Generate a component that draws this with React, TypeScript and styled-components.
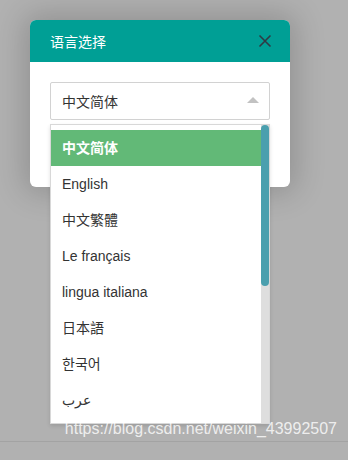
import React from 'react';
import styled, { createGlobalStyle } from 'styled-components';

const GlobalStyle = createGlobalStyle`
  html, body {
    margin: 0;
    padding: 0;
    background: #b1b1b1;
    font-family: "Liberation Sans", "Noto Sans CJK SC", Arial, sans-serif;
  }
`;

const Page = styled.div`
  position: relative;
  width: 348px;
  height: 460px;
  overflow: hidden;
  display: flex;
  flex-direction: column;
  background: #b1b1b1;
`;

const Stage = styled.div`
  padding: 20px 58px 0 30px;
`;

const Modal = styled.div`
  position: relative;
  width: 260px;
  border-radius: 6px;
  background: #fff;
  box-shadow: 0 0 30px 6px rgba(0, 0, 0, 0.18);
`;

const Header = styled.div`
  height: 42px;
  display: flex;
  align-items: center;
  justify-content: space-between;
  padding: 0 18px 0 20px;
  background: #009f95;
  border-radius: 6px 6px 0 0;
  color: #fff;
  font-size: 14px;
`;

const CloseButton = styled.button`
  width: 14px;
  height: 14px;
  padding: 0;
  border: 0;
  background: none;
  display: flex;
  cursor: pointer;
`;

const Body = styled.div`
  position: relative;
  padding: 20px 20px 67px;
`;

const SelectBox = styled.div`
  height: 36px;
  border: 1px solid #d2d2d2;
  border-radius: 2px;
  display: flex;
  align-items: center;
  justify-content: space-between;
  padding: 0 10px 0 11px;
  font-size: 14px;
  color: #333;
`;

const Caret = styled.span`
  width: 0;
  height: 0;
  border-left: 6px solid transparent;
  border-right: 6px solid transparent;
  border-bottom: 6px solid #c2c2c2;
  margin-top: -2px;
`;

const Menu = styled.div`
  position: absolute;
  left: 20px;
  top: 62px;
  width: 220px;
  height: 300px;
  box-sizing: border-box;
  border: 1px solid #d8d8d8;
  background: #fff;
  box-shadow: 0 2px 4px rgba(0, 0, 0, 0.12);
  display: flex;
`;

const List = styled.ul`
  flex: 1;
  list-style: none;
  margin: 0;
  padding: 5px 0 0;
  overflow: hidden;
`;

const Item = styled.li<{ $active?: boolean }>`
  height: 36px;
  line-height: 36px;
  padding: 0 11px;
  font-size: 14px;
  color: ${({ $active }) => ($active ? '#fff' : '#333')};
  font-weight: ${({ $active }) => ($active ? 'bold' : 'normal')};
  background: ${({ $active }) => ($active ? '#62b977' : 'transparent')};
`;

const Track = styled.div`
  width: 8px;
  background: #dedede;
  display: flex;
  flex-direction: column;
`;

const Thumb = styled.div`
  height: 161px;
  background: #4a9fae;
  border-radius: 4px;
`;

const Footer = styled.div`
  margin-top: auto;
  height: 18px;
  border-top: 1px solid #a3a3a3;
`;

const Watermark = styled.div`
  position: absolute;
  right: 11px;
  top: 420px;
  font-size: 16px;
  color: rgba(255, 255, 255, 0.8);
`;

const languages = [
  '中文简体',
  'English',
  '中文繁體',
  'Le français',
  'lingua italiana',
  '日本語',
  '한국어',
  'عرب',
];

const App: React.FC = () => {
  return (
    <Page>
      <GlobalStyle />
      <Stage>
        <Modal>
          <Header>
            <span>语言选择</span>
            <CloseButton aria-label="close">
              <svg width="14" height="14" viewBox="0 0 14 14">
                <path d="M1.5 1.5L12.5 12.5M12.5 1.5L1.5 12.5" stroke="#2f3a44" strokeWidth="1.6" />
              </svg>
            </CloseButton>
          </Header>
          <Body>
            <SelectBox>
              <span>中文简体</span>
              <Caret />
            </SelectBox>
            <Menu>
              <List>
                {languages.map((lang, i) => (
                  <Item key={lang} $active={i === 0}>
                    {lang}
                  </Item>
                ))}
              </List>
              <Track>
                <Thumb />
              </Track>
            </Menu>
          </Body>
        </Modal>
      </Stage>
      <Footer />
      <Watermark>https://blog.csdn.net/weixin_43992507</Watermark>
    </Page>
  );
};

export default App;
